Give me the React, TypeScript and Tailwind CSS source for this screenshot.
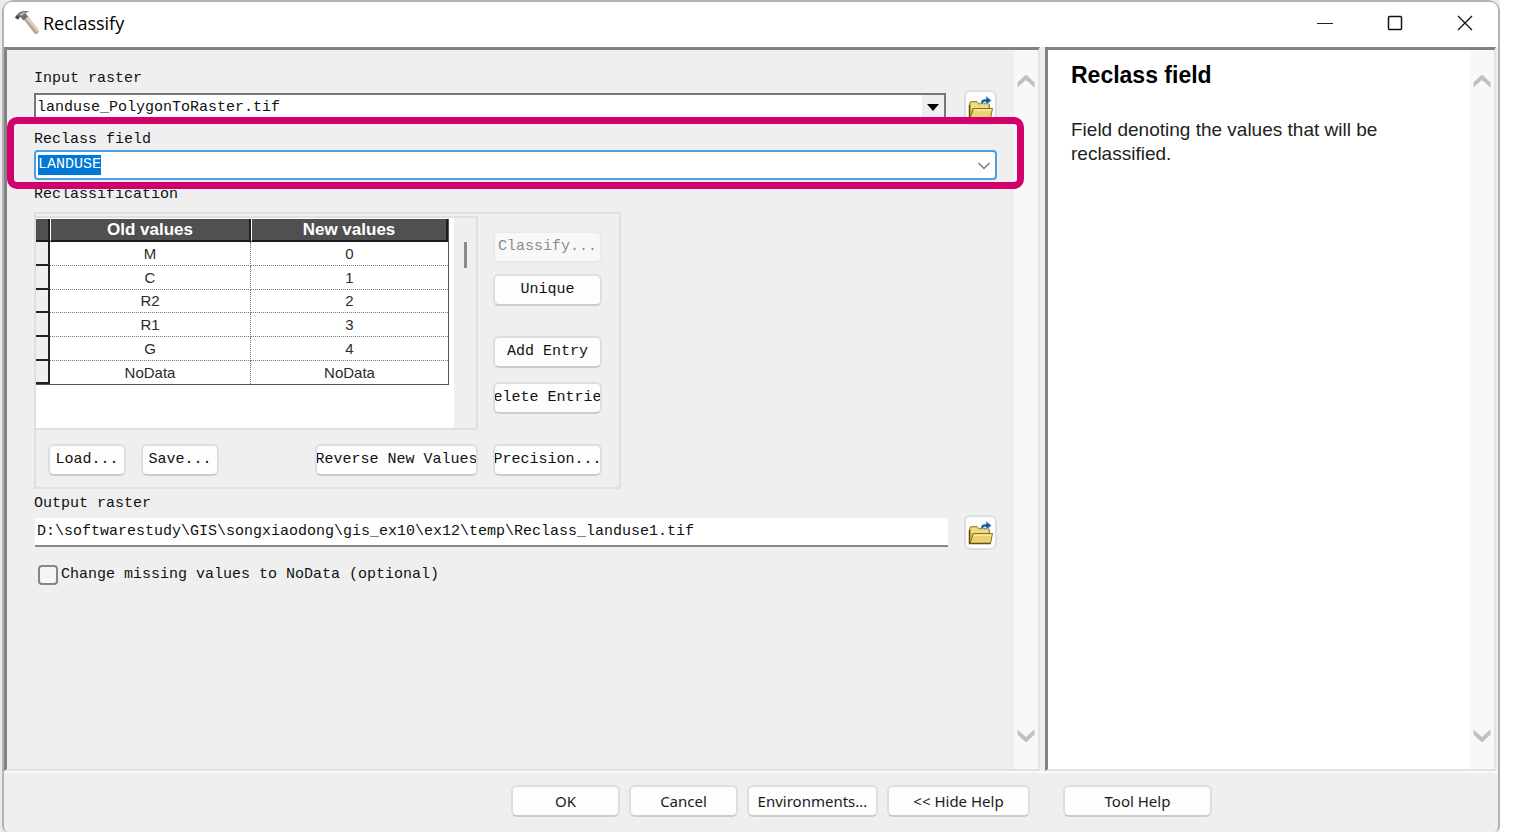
import React, { useState } from "react";
import clsx from "clsx";

const rows = [
  ["M", "0"],
  ["C", "1"],
  ["R2", "2"],
  ["R1", "3"],
  ["G", "4"],
  ["NoData", "NoData"],
];

const HammerIcon = () => (
  <svg viewBox="0 0 26 26" className="w-[26px] h-[26px] shrink-0" aria-hidden="true">
    <path d="M9.500 9.500 L13.500 6 L24.800 20 Q25.500 23.500 21.500 24.200 Z" fill="#b8aa92" />
    <path d="M11.500 8 L13.500 6 L24.800 20 L23.500 22 Z" fill="#ded3bf" />
    <path d="M9.500 9.500 L21.500 24.200 L20.500 22.500 L9.500 9.500 Z" fill="#82745f" />
    <path d="M1 7.500 L5 2.500 Q10 0.300 15.500 1.500 Q11.500 2.500 12 4 L14 6.500 L9.500 10.500 L7 7.500 Q5 6.500 4 9.500 Z" fill="#6b7071" />
    <path d="M5 4 Q9 1.600 14 1.800 Q11 3 10.500 4.500 L7 6 Z" fill="#a7acad" />
    <path d="M1 7.500 L3 5 L5.500 7.500 L4 9.500 Z" fill="#44484a" />
  </svg>
);

const FolderIcon = () => (
  <svg viewBox="0 0 26 26" className="w-[26px] h-[26px]" aria-hidden="true">
    <path d="M1.500 23 V8.500 Q1.500 6.500 3.500 6.500 H9 L11 8.500 H20 Q21.500 8.500 21.500 10 V23 Z" fill="#d9bc4a" stroke="#a38a34" />
    <path d="M3 9 Q3 8 4 8 H8.500 L10.500 10 H20 V13 H3 Z" fill="#f0dc84" />
    <path d="M2 23.500 L5.500 13.500 H24.500 L22.500 23.500 Z" fill="#ecd272" stroke="#8a7020" />
    <path d="M6 14.500 H23.500 L23.200 16 H5.500 Z" fill="#f6e7a0" />
    <path d="M1.500 10 V23.500 H22.500" fill="none" stroke="#65500f" strokeWidth="1.500" />
    <path d="M13 9.500 Q12 4.500 16.500 4 H18 V1 L23.500 5.500 L18 10 V7 H16.500 Q15 7 15 9.500 Z" fill="#14599a" stroke="#cfe4f3" strokeWidth=".8" />
  </svg>
);

const Chevron = ({ className }: { className?: string }) => (
  <svg viewBox="0 0 18 14" className={clsx("w-[18px] h-[14px]", className)} aria-hidden="true">
    <path d="M0.500 0.500 L9 8 L17.500 0.500 V5.500 L9 13.500 L0.500 5.500 Z" fill="#c0c0c0" />
  </svg>
);

const ScrollBar = () => (
  <div className="w-6 shrink-0 bg-[#f8f8f8] flex flex-col items-center justify-between pt-6 pb-[26px]">
    <button type="button" aria-label="Scroll up">
      <Chevron className="block rotate-180" />
    </button>
    <button type="button" aria-label="Scroll down">
      <Chevron className="block" />
    </button>
  </div>
);

const Button = ({ children, className, disabled }: { children: React.ReactNode; className?: string; disabled?: boolean }) => (
  <button
    type="button"
    disabled={disabled}
    className={clsx(
      "h-8 shrink-0 rounded-md border-2 flex items-center justify-center overflow-hidden whitespace-nowrap",
      disabled ? "bg-[#f8f8f8] border-[#eaeaea] text-[#8b8b8b]" : "bg-[#fdfdfd] border-[#dedede] border-b-[#cccccc]",
      className
    )}
  >
    {children}
  </button>
);

const BrowseButton = ({ label }: { label: string }) => (
  <button
    type="button"
    aria-label={label}
    className="w-[33px] h-[35px] shrink-0 rounded-md border-2 border-[#dedede] bg-[#fdfdfd] flex items-center justify-center"
  >
    <FolderIcon />
  </button>
);

const TitleBar = () => (
  <header className="h-[45px] shrink-0 bg-white rounded-t-lg flex items-center pl-2.5 pr-[25px] pb-1">
    <HammerIcon />
    <h1 className="ml-[3px] flex-1 font-['Open_Sans',sans-serif] text-lg leading-6">Reclassify</h1>
    <div className="flex items-center gap-[54px]">
      <button type="button" aria-label="Minimize">
        <svg viewBox="0 0 16 16" className="block w-4 h-4"><path d="M0 8.500 H16" stroke="#222" /></svg>
      </button>
      <button type="button" aria-label="Maximize">
        <svg viewBox="0 0 16 16" className="block w-4 h-4"><rect x="1.500" y="1.500" width="13" height="13" rx="1" fill="none" stroke="#111" strokeWidth="1.500" /></svg>
      </button>
      <button type="button" aria-label="Close">
        <svg viewBox="0 0 16 16" className="block w-4 h-4"><path d="M1 1 L15 15 M15 1 L1 15" stroke="#111" strokeWidth="1.300" /></svg>
      </button>
    </div>
  </header>
);

const ValuesTable = () => (
  <div className="h-[214px] border-2 border-l-0 border-[#e0e0e0] flex bg-white">
    <div className="flex-1 pt-px">
      <table className="w-[413px] table-fixed border-separate border-spacing-0 border-r border-b border-[#555] font-['Liberation_Sans',Arial,sans-serif] text-[15px] leading-5 text-[#2b2b2b] text-center">
        <thead>
          <tr className="h-[23px] bg-[#505050] text-white text-[17px]">
            <td className="w-[14px] p-0 border-r-2 border-b-2 border-[#1c1c1c]"></td>
            <th scope="col" className="w-[201px] p-0 border-l border-l-white border-r-2 border-r-[#1c1c1c] border-b-2 border-b-[#1c1c1c]">Old values</th>
            <th scope="col" className="p-0 border-l border-l-white border-r-2 border-r-[#1c1c1c] border-b-2 border-b-[#1c1c1c]">New values</th>
          </tr>
        </thead>
        <tbody>
          {rows.map(([oldValue, newValue], i) => {
            const line = i < rows.length - 1 && "border-b border-dotted border-b-[#777]";
            return (
              <tr key={oldValue} className={i % 3 === 2 ? "h-[23px]" : "h-6"}>
                <td className="p-0 bg-[#efefef] border-r-2 border-b-2 border-[#222]"></td>
                <td className={clsx("p-0 border-r border-dotted border-r-[#777]", line)}>{oldValue}</td>
                <td className={clsx("p-0", line)}>{newValue}</td>
              </tr>
            );
          })}
        </tbody>
      </table>
    </div>
    <div className="w-[22px] bg-[#efefef] pt-6 flex justify-center">
      <div className="w-[3px] h-[26px] bg-[#8a8a8a]"></div>
    </div>
  </div>
);

const Reclassification = () => (
  <fieldset aria-labelledby="reclassification" className="w-[587px] mt-[7px] border-2 border-[#e0e0e0] pt-0.5 pb-[11px] flex">
    <div className="w-[442px]">
      <ValuesTable />
      <div className="mt-[14px] flex pl-3">
        <Button className="w-[78px]">Load...</Button>
        <Button className="w-[78px] ml-[15px]">Save...</Button>
        <Button className="w-[163px] ml-auto">Reverse New Values</Button>
      </div>
    </div>
    <div className="ml-[15px] pt-[15px] flex flex-col">
      <Button disabled className="w-[109px]">Classify...</Button>
      <Button className="w-[109px] mt-[11px]">Unique</Button>
      <Button className="w-[109px] mt-[30px]">Add Entry</Button>
      <Button className="w-[109px] mt-[14px]">Delete Entries</Button>
      <Button className="w-[109px] mt-auto">Precision...</Button>
    </div>
  </fieldset>
);

const Parameters = () => {
  const [noData, setNoData] = useState(false);

  return (
    <main className="flex-1 min-w-0 flex border-l-3 border-t-3 border-[#828282] border-r-2 border-r-[#e4e4e4] border-b-2 border-b-[#e2e2e2]">
      <form className="flex-1 min-w-0 pl-[27px] pr-[17px] pt-[19px] font-['Liberation_Mono','Courier_New',monospace] text-[15px] leading-5 text-[#111]">
        <label htmlFor="input-raster" className="block">Input raster</label>
        <div className="h-[35px] mt-px flex items-start">
          <div className="relative flex-1 h-[29px] mt-[3px] mr-[18px]">
            <select id="input-raster" className="appearance-none w-full h-full bg-white border-2 border-[#777] pl-px pr-6 leading-5">
              <option>landuse_PolygonToRaster.tif</option>
            </select>
            <div className="absolute right-0.5 top-0.5 bottom-0.5 w-[22px] bg-[#efefef] flex items-center justify-center pointer-events-none">
              <svg viewBox="0 0 12 7" className="w-3 h-[7px]"><path d="M0 0 H12 L6 7 Z" fill="#000" /></svg>
            </div>
          </div>
          <BrowseButton label="Browse input raster" />
        </div>

        <div className="relative mt-[5px]">
          <label htmlFor="reclass-field" className="block">Reclass field</label>
          <div className="h-[30px] bg-white border-2 border-[#4b9fe0] rounded-sm flex items-center justify-between pl-0.5 pr-1">
            <select id="reclass-field" className="appearance-none [field-sizing:content] h-5 bg-[#0078d7] text-white leading-5">
              <option>LANDUSE</option>
            </select>
            <svg viewBox="0 0 14 14" className="w-[14px] h-[14px]"><path d="M1.500 5 L7 10.500 L12.500 5" fill="none" stroke="#777" strokeWidth="1.400" /></svg>
          </div>
          {/* callout frame around the field */}
          <div className="absolute -top-[13px] -left-[27px] -right-[27px] -bottom-[9px] border-[7px] border-[#d1006c] rounded-[10px] pointer-events-none"></div>
        </div>

        <div id="reclassification" className="mt-[5px]">Reclassification</div>
        <Reclassification />

        <label htmlFor="output-raster" className="block mt-[5px]">Output raster</label>
        <div className="flex items-center mt-px">
          <input
            id="output-raster"
            type="text"
            defaultValue="D:\softwarestudy\GIS\songxiaodong\gis_ex10\ex12\temp\Reclass_landuse1.tif"
            className="flex-1 min-w-0 h-[29px] mr-4 ml-px bg-white border-b-2 border-[#888] px-0.5"
          />
          <BrowseButton label="Browse output raster" />
        </div>

        <div className="flex items-center mt-[15px] ml-1">
          <input
            id="missing"
            type="checkbox"
            checked={noData}
            onChange={(e) => setNoData(e.target.checked)}
            className="appearance-none w-5 h-5 rounded border-2 border-[#858585] bg-[#f6f6f6] checked:bg-[#0078d7]"
          />
          <label htmlFor="missing" className="ml-[3px]">Change missing values to NoData (optional)</label>
        </div>
      </form>
      <ScrollBar />
    </main>
  );
};

const HelpPanel = () => (
  <aside className="w-[451px] shrink-0 flex bg-white border-l-3 border-t-3 border-[#828282] border-r-2 border-r-[#e4e4e4] border-b-2 border-b-[#e2e2e2] font-['Liberation_Sans',Arial,sans-serif]">
    <div className="flex-1 pl-[23px] pt-[11px] pr-10">
      <h2 className="text-[23px] leading-7 font-bold text-black">Reclass field</h2>
      <p className="mt-[29px] text-[19px] leading-6 text-[#222]">Field denoting the values that will be reclassified.</p>
    </div>
    <ScrollBar />
  </aside>
);

const App: React.FC = () => {
  return (
    <div className="min-h-screen flex flex-col bg-white">
      <div className="flex-1 flex mb-2 mr-[19px] pl-0.5 bg-[#e9eceb]">
        <div className="flex-1 min-w-0 flex flex-col bg-[#efefef] border-2 border-b-0 border-[#b3b3b3] rounded-t-xl rounded-b-md">
          <TitleBar />
          <div className="flex-1 flex gap-[5px] pr-0.5">
            <Parameters />
            <HelpPanel />
          </div>
          <footer className="h-[61px] border-t-2 border-[#fafafa] flex items-center justify-end gap-[9px] pr-[286px] pb-[3px] font-['Noto_Sans',sans-serif] text-[15px] text-[#1a1a1a]">
            <Button className="w-[109px]">OK</Button>
            <Button className="w-[109px]">Cancel</Button>
            <Button className="w-[131px]">Environments...</Button>
            <Button className="w-[143px]">&lt;&lt; Hide Help</Button>
            <Button className="w-[149px] ml-6">Tool Help</Button>
          </footer>
        </div>
      </div>
    </div>
  );
};

export default App;
